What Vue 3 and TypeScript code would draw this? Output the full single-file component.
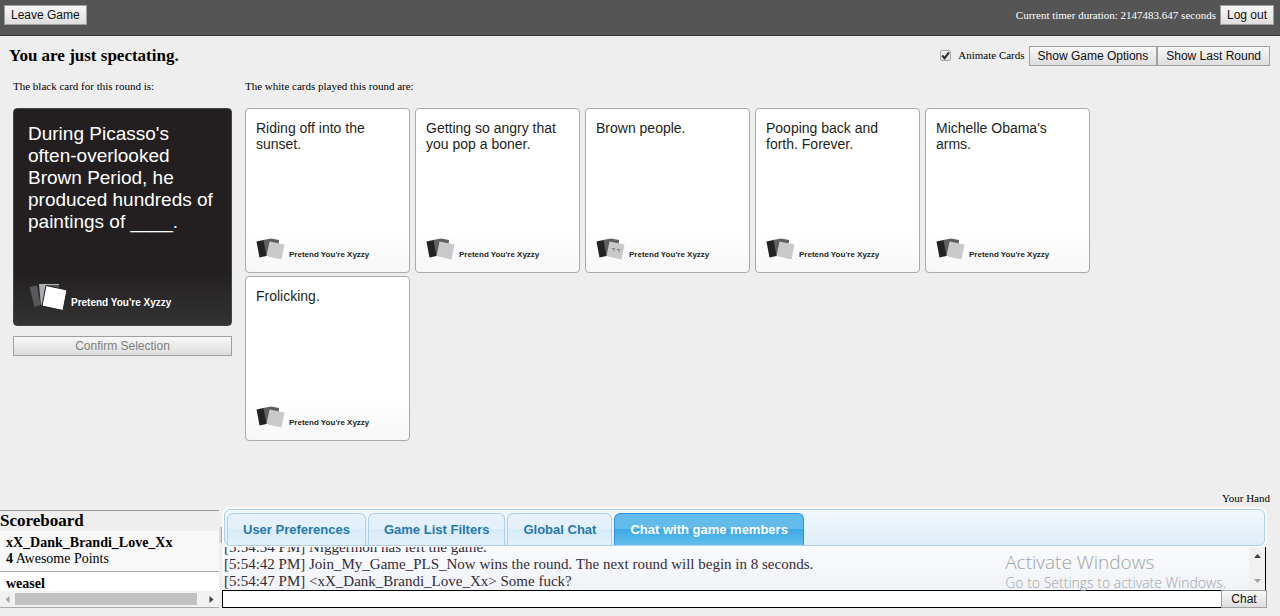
<script setup lang="ts">
import { onMounted, ref } from 'vue'

interface WhiteCard {
  id: number
  text: string
  watermark?: boolean
}

interface Player {
  name: string
  points?: number
}

const blackCard = "During Picasso's often-overlooked Brown Period, he produced hundreds of paintings of ____."

const whiteCards: WhiteCard[] = [
  { id: 1, text: 'Riding off into the sunset.' },
  { id: 2, text: 'Getting so angry that you pop a boner.' },
  { id: 3, text: 'Brown people.', watermark: true },
  { id: 4, text: 'Pooping back and forth. Forever.' },
  { id: 5, text: "Michelle Obama's arms." },
  { id: 6, text: 'Frolicking.' },
]

const players: Player[] = [
  { name: 'xX_Dank_Brandi_Love_Xx', points: 4 },
  { name: 'weasel' },
]

const tabs = ['User Preferences', 'Game List Filters', 'Global Chat', 'Chat with game members']
const activeTab = ref(3)

const messages = [
  '[5:54:34 PM] Niggermon has left the game.',
  '[5:54:42 PM] Join_My_Game_PLS_Now wins the round. The next round will begin in 8 seconds.',
  '[5:54:47 PM] <xX_Dank_Brandi_Love_Xx> Some fuck?',
]

const animate = ref(true)
const draft = ref('')
const log = ref<HTMLElement | null>(null)

onMounted(() => {
  if (log.value) log.value.scrollTop = log.value.scrollHeight
})
</script>

<template>
  <div class="page">
    <header class="menubar">
      <button type="button" class="btn">Leave Game</button>
      <div class="menu-right">
        <span>Current timer duration: 2147483.647 seconds</span>
        <button type="button" class="btn">Log out</button>
      </div>
    </header>

    <main class="game">
      <div class="status-row">
        <h1>You are just spectating.</h1>
        <div class="options">
          <label class="animate">
            <span class="tick">
              <input v-model="animate" type="checkbox" />
              <svg v-if="animate" viewBox="0 0 11 11" aria-hidden="true">
                <path d="M2.2 5.6 4.6 8.2 9 2.4" fill="none" stroke="#333" stroke-width="2.2" />
              </svg>
            </span>
            Animate Cards
          </label>
          <button type="button" class="btn">Show Game Options</button>
          <button type="button" class="btn">Show Last Round</button>
        </div>
      </div>

      <div class="table">
        <section class="black-side">
          <h2>The black card for this round is:</h2>
          <article class="card black">
            <p>{{ blackCard }}</p>
            <footer>
              <svg class="logo" viewBox="0 0 40 30" aria-hidden="true">
                <path d="M1.5 6 9 4.5 12.500 24 6.500 26Z" fill="#58585a" />
                <path d="M11 3 31 3.500 31 24 13 24Z" fill="#555" />
                <path d="M11 3 19 3 14.500 23.500 13 24Z" fill="#a9abae" />
                <path d="M11 3.500 31 3.500" stroke="#b4b4b4" />
                <path d="M18 4.500 39 9 35 29.500 14 25Z" fill="#fff" stroke="#231f20" />
              </svg>
              <span>Pretend You're Xyzzy</span>
            </footer>
          </article>
          <button type="button" class="btn confirm" disabled>Confirm Selection</button>
        </section>

        <section class="white-side">
          <h2>The white cards played this round are:</h2>
          <div class="played">
            <article v-for="card in whiteCards" :key="card.id" class="card white">
              <p>{{ card.text }}</p>
              <footer>
                <svg class="logo" viewBox="0 0 29 22" aria-hidden="true">
                  <path d="M7 2 15 0.500 23 2 22 18 9 18Z" fill="#606062" />
                  <path d="M0.500 3.500 7.500 2 10.500 18 3.500 19.500Z" fill="#242122" />
                  <path d="M13.500 3.500 28.500 6.500 25.500 21.500 10.500 18Z" fill="#c8c9cb" />
                  <path
                    v-if="card.watermark"
                    d="M16 10.500 18.500 10.500 17.500 13M21 11.500 23.500 11.500 22.500 14"
                    fill="none"
                    stroke="#777"
                  />
                </svg>
                <span>Pretend You're Xyzzy</span>
              </footer>
            </article>
          </div>
        </section>
      </div>

      <div class="hand">Your Hand</div>
    </main>

    <div class="bottom">
      <aside class="scoreboard">
        <h2>Scoreboard</h2>
        <div class="scores">
          <div v-for="p in players" :key="p.name" class="score">
            <b>{{ p.name }}</b>
            <span v-if="p.points !== undefined"><b>{{ p.points }}</b> Awesome Points</span>
          </div>
        </div>
        <div class="hbar">
          <svg viewBox="0 0 5 7" aria-hidden="true"><path d="M4.500 0V7L0.500 3.500Z" fill="#a3a3a3" /></svg>
          <div class="thumb"></div>
          <svg viewBox="0 0 5 7" aria-hidden="true"><path d="M0.500 0V7L4.500 3.500Z" fill="#404040" /></svg>
        </div>
      </aside>
      <div class="splitter"></div>

      <section class="chat">
        <div class="tabs" role="tablist">
          <button
            v-for="(tab, i) in tabs"
            :key="tab"
            type="button"
            role="tab"
            :aria-selected="i === activeTab"
            :class="['tab', { active: i === activeTab }]"
            @click="activeTab = i"
          >{{ tab }}</button>
        </div>
        <div class="log-wrap">
          <div ref="log" class="log">
            <div v-for="m in messages" :key="m">{{ m }}</div>
          </div>
          <div class="vbar">
            <svg viewBox="0 0 7 4" aria-hidden="true"><path d="M0 4H7L3.500 0Z" fill="#404040" /></svg>
            <svg viewBox="0 0 7 4" aria-hidden="true"><path d="M0 0H7L3.500 4Z" fill="#a3a3a3" /></svg>
          </div>
        </div>
        <form class="send" @submit.prevent>
          <input v-model="draft" type="text" aria-label="Chat message" />
          <button type="submit" class="btn">Chat</button>
        </form>
      </section>
    </div>

    <div class="activate">
      <div class="big">Activate Windows</div>
      <div>Go to Settings to activate Windows.</div>
    </div>
  </div>
</template>

<style>
body {
  margin: 0;
  background: #eee;
}
</style>

<style scoped>
* {
  box-sizing: border-box;
}
.page {
  position: relative;
  display: flex;
  flex-direction: column;
  min-height: 100vh;
  overflow: hidden;
  background: #eee;
  color: #000;
  font: 11px/16px "Liberation Serif", "Times New Roman", serif;
}
h1,
h2,
p {
  margin: 0;
}
.btn {
  height: 20px;
  padding: 0 6px;
  border: 1px solid #a0a0a0;
  border-radius: 0;
  background: linear-gradient(#f8f8f8, #dddddd);
  color: #111;
  font: 12px/16px "Liberation Sans", Arial, sans-serif;
  white-space: nowrap;
}
.menubar {
  display: flex;
  justify-content: space-between;
  align-items: flex-start;
  height: 36px;
  padding: 5px 6px 0 4px;
  background: #555;
  border-bottom: 1px solid #333;
  color: #fff;
}
.menu-right {
  display: flex;
  align-items: center;
  gap: 4px;
}
.game {
  flex: 1;
  display: flex;
  flex-direction: column;
  padding: 10px 10px 0 9px;
}
.status-row {
  display: flex;
  justify-content: space-between;
  height: 32px;
}
h1 {
  font-size: 17px;
  line-height: 20px;
}
.options {
  display: flex;
  align-items: flex-start;
}
.options .btn {
  padding: 0 8px;
}
.animate {
  display: flex;
  align-items: center;
  gap: 7px;
  height: 18px;
  margin-right: 4px;
}
.tick {
  display: grid;
  width: 11px;
  height: 11px;
}
.tick > * {
  grid-area: 1 / 1;
  width: 11px;
  height: 11px;
  margin: 0;
}
.tick svg {
  pointer-events: none;
}
.tick input {
  appearance: none;
  border: 1px solid #aaa;
  border-radius: 2px;
  background: linear-gradient(#f2f2f2, #ddd);
}
.table {
  display: flex;
  gap: 13px;
  padding-left: 4px;
}
.table h2 {
  margin-bottom: 14px;
  font-size: 11px;
  font-weight: normal;
  line-height: 16px;
}
.black-side {
  flex: none;
  width: 219px;
}
.white-side {
  flex: 1;
}
.played {
  display: flex;
  flex-wrap: wrap;
  gap: 3px 5px;
  padding-right: 24px;
}
.card {
  display: flex;
  flex-direction: column;
  justify-content: space-between;
  border: 1px solid #aaa;
  border-radius: 4px;
  font-family: "Liberation Sans", Arial, sans-serif;
}
.card footer {
  display: flex;
  align-items: flex-end;
  font-weight: bold;
}
.black {
  height: 218px;
  padding: 14px;
  border-color: #444;
  background: linear-gradient(#231f20 75%, #333);
  color: #fff;
  font-size: 19px;
  line-height: 22px;
}
.black footer {
  gap: 3px;
  font-size: 10px;
  line-height: 16px;
}
.black .logo {
  width: 40px;
  height: 30px;
}
.white {
  width: 165px;
  height: 165px;
  padding: 11px 10px 10px;
  background: linear-gradient(#fff 75%, #f7f7f7);
  color: #231f20;
  font-size: 14px;
  line-height: 16px;
}
.white footer {
  gap: 4px;
  font-size: 8px;
  line-height: 14px;
}
.white .logo {
  width: 29px;
  height: 22px;
  margin-bottom: 2px;
}
.confirm {
  width: 100%;
  margin-top: 10px;
  color: #808080;
}
.hand {
  margin-top: auto;
  padding-bottom: 2px;
  text-align: right;
}
.bottom {
  display: flex;
  height: 108px;
  padding-bottom: 8px;
  font-size: 15px;
  line-height: 17px;
}
.scoreboard {
  display: flex;
  flex-direction: column;
  flex: none;
  width: 219px;
  margin-top: 2px;
  border-top: 1px solid #999;
  border-bottom: 1px solid #aaa;
}
.scoreboard h2 {
  font-size: 17px;
  line-height: 20px;
}
.scores {
  flex: 1;
  min-height: 0;
  overflow: hidden;
}
.score {
  display: flex;
  flex-direction: column;
  height: 41px;
  padding: 4px 6px 2px;
  border-bottom: 1px solid #aaa;
  background: #f8f8f8;
  font-size: 14px;
  line-height: 16px;
}
.score:nth-child(even) {
  background: #fff;
}
.hbar {
  display: flex;
  align-items: center;
  justify-content: space-between;
  height: 16px;
  padding: 0 5px;
  background: #f1f1f1;
}
.hbar svg {
  width: 5px;
  height: 7px;
}
.thumb {
  flex: 1;
  height: 12px;
  margin: 0 12px 0 5px;
  background: #c1c1c1;
}
.splitter {
  width: 3px;
  height: 16px;
  margin-top: 19px;
  background: #ddd;
  border-right: 1px solid #aaa;
}
.chat {
  flex: 1;
  min-width: 0;
  display: flex;
  flex-direction: column;
  margin-right: 13px;
}
.tabs {
  display: flex;
  align-items: flex-end;
  gap: 2px;
  height: 37px;
  margin: 1px 2px 1px;
  padding: 0 2px;
  border: 1px solid #aed0ea;
  border-radius: 6px;
  background: linear-gradient(#f2f8fd, #deedf7);
  box-shadow: 0 0 0 2px #f8fbfd;
}
.tab {
  height: 32px;
  padding: 0 15px;
  border: 1px solid #aed0ea;
  border-bottom: 0;
  border-radius: 6px 6px 0 0;
  background: linear-gradient(#e4f1fb 50%, #d7ebf9 50%, #e2f1fb);
  color: #2779aa;
  font: bold 13px/16px "Liberation Sans", Arial, sans-serif;
  white-space: nowrap;
}
.tab.active {
  border-color: #2694e8;
  background: linear-gradient(#62bbe8 50%, #3baae3 50%, #65bdea);
  color: #fff;
}
.log-wrap {
  flex: 1;
  min-height: 0;
  display: flex;
  margin-right: 1px;
  border-right: 1px solid #000;
  background: linear-gradient(#fafbfd, #f0f3f7);
}
.log {
  flex: 1;
  overflow: hidden;
  padding-left: 2px;
  color: #362b36;
}
.vbar {
  display: flex;
  flex-direction: column;
  justify-content: space-between;
  align-items: center;
  width: 16px;
  padding: 7px 0;
  background: #f1f1f1;
}
.vbar svg {
  width: 7px;
  height: 4px;
}
.send {
  display: flex;
  height: 18px;
}
.send input {
  flex: 1;
  min-width: 0;
  padding: 0 4px;
  border: 1px solid #000;
  border-right: 0;
  border-radius: 0;
  background: #fff;
  font: inherit;
}
.send .btn {
  width: 46px;
  height: 18px;
}
.activate {
  position: absolute;
  right: 54px;
  bottom: 23px;
  color: #a2a3a5;
  font: 300 14px/20px "Open Sans", "Noto Sans", sans-serif;
  pointer-events: none;
}
.activate .big {
  font-size: 19px;
  line-height: 22px;
}
</style>
